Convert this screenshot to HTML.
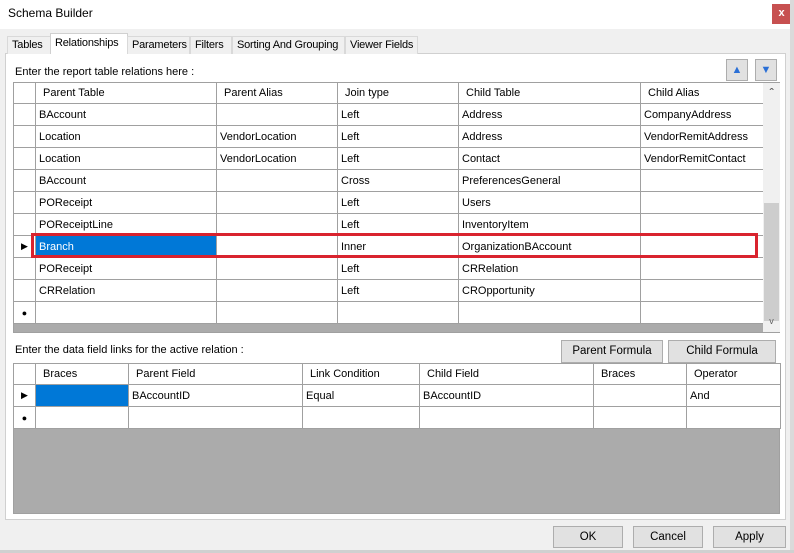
<!DOCTYPE html>
<html><head><meta charset="utf-8"><style>
*{box-sizing:border-box;margin:0;padding:0}
body{width:794px;height:553px;background:#f0f0f0;font-family:"Liberation Sans",sans-serif;font-size:11px;color:#000;position:relative;overflow:hidden}
.a{position:absolute;white-space:nowrap}
.tab{position:absolute;top:36px;height:18px;border:1px solid #d9d9d9;border-bottom:none;background:#f0f0f0;padding:2px 0 0 4px;font-size:11px;white-space:nowrap;overflow:hidden;letter-spacing:-0.2px}
.btn{position:absolute;background:#e1e1e1;border:1px solid #adadad;text-align:center;font-size:11.5px;white-space:nowrap}
table{border-collapse:collapse;position:absolute;table-layout:fixed;background:#fff}
td{border:1px solid #a0a0a0;height:22px;padding:0 3px;white-space:nowrap;overflow:hidden;font-size:11px}
tr.h td{height:21px;padding-left:7px}
td.rh{padding:0;text-align:center;font-size:9px}
.sel{background:#0078d7;color:#fff}
</style></head><body>
<div class="a" style="left:0;top:0;width:794px;height:29px;background:#fff"></div>
<div class="a" style="left:8px;top:6px;font-size:12px">Schema Builder</div>
<div class="a" style="left:772px;top:4px;width:19px;height:20px;background:#c75050;color:#fff;font-size:11px;text-align:center;line-height:19px;font-weight:bold">x</div>
<div class="a" style="left:790px;top:0;width:4px;height:553px;background:#dadada"></div>
<div class="a" style="left:0;top:550px;width:794px;height:3px;background:#d0d0d0"></div>

<div class="a" style="left:5px;top:53px;width:781px;height:467px;background:#fff;border:1px solid #d0d0d0"></div>
<div class="tab" style="left:7px;width:44px">Tables</div>
<div class="tab" style="left:50px;top:33px;height:21px;width:78px;background:#fff;border-color:#d0d0d0;padding-top:3px">Relationships</div>
<div class="tab" style="left:127px;width:63px">Parameters</div>
<div class="tab" style="left:190px;width:42px">Filters</div>
<div class="tab" style="left:232px;width:113px">Sorting And Grouping</div>
<div class="tab" style="left:345px;width:73px">Viewer Fields</div>

<div class="a" style="left:15px;top:66px">Enter the report table relations here :</div>
<div class="btn" style="left:726px;top:59px;width:22px;height:22px;color:#2a6fd6;font-size:11px;line-height:20px">&#9650;</div>
<div class="btn" style="left:755px;top:59px;width:22px;height:22px;color:#2a6fd6;font-size:11px;line-height:20px">&#9660;</div>

<div class="a" style="left:13px;top:82px;width:767px;height:251px;background:#ababab;border:1px solid #a0a0a0"></div>
<table style="left:13px;top:82px;width:750px">
<colgroup><col style="width:22px"><col style="width:181px"><col style="width:121px"><col style="width:121px"><col style="width:182px"><col style="width:123px"></colgroup>
<tr class="h"><td class="rh"></td><td>Parent Table</td><td>Parent Alias</td><td>Join type</td><td>Child Table</td><td>Child Alias</td></tr>
<tr><td class="rh"></td><td>BAccount</td><td></td><td>Left</td><td>Address</td><td>CompanyAddress</td></tr>
<tr><td class="rh"></td><td>Location</td><td>VendorLocation</td><td>Left</td><td>Address</td><td>VendorRemitAddress</td></tr>
<tr><td class="rh"></td><td>Location</td><td>VendorLocation</td><td>Left</td><td>Contact</td><td>VendorRemitContact</td></tr>
<tr><td class="rh"></td><td>BAccount</td><td></td><td>Cross</td><td>PreferencesGeneral</td><td></td></tr>
<tr><td class="rh"></td><td>POReceipt</td><td></td><td>Left</td><td>Users</td><td></td></tr>
<tr><td class="rh"></td><td>POReceiptLine</td><td></td><td>Left</td><td>InventoryItem</td><td></td></tr>
<tr><td class="rh">&#9654;</td><td class="sel">Branch</td><td></td><td>Inner</td><td>OrganizationBAccount</td><td></td></tr>
<tr><td class="rh"></td><td>POReceipt</td><td></td><td>Left</td><td>CRRelation</td><td></td></tr>
<tr><td class="rh"></td><td>CRRelation</td><td></td><td>Left</td><td>CROpportunity</td><td></td></tr>
<tr><td class="rh">&#9679;</td><td></td><td></td><td></td><td></td><td></td></tr>
</table>
<div class="a" style="left:763px;top:83px;width:17px;height:249px;background:#f0f0f0"></div>
<div class="a" style="left:764px;top:203px;width:15px;height:118px;background:#cdcdcd"></div>
<div class="a" style="left:764px;top:86px;width:15px;text-align:center;font-size:12px;color:#606060;font-weight:bold">&#710;</div>
<div class="a" style="left:764px;top:316px;width:15px;text-align:center;font-size:9px;color:#606060">v</div>
<div class="a" style="left:31px;top:233px;width:727px;height:25px;border:3px solid #d9232e"></div>

<div class="a" style="left:15px;top:344px">Enter the data field links for the active relation :</div>
<div class="btn" style="left:561px;top:340px;width:102px;height:23px;line-height:21px">Parent Formula</div>
<div class="btn" style="left:668px;top:340px;width:108px;height:23px;line-height:21px">Child Formula</div>

<div class="a" style="left:13px;top:363px;width:767px;height:151px;background:#ababab;border:1px solid #a0a0a0"></div>
<table style="left:13px;top:363px;width:767px">
<colgroup><col style="width:22px"><col style="width:93px"><col style="width:174px"><col style="width:117px"><col style="width:174px"><col style="width:93px"><col style="width:94px"></colgroup>
<tr class="h"><td class="rh"></td><td>Braces</td><td>Parent Field</td><td>Link Condition</td><td>Child Field</td><td>Braces</td><td>Operator</td></tr>
<tr><td class="rh">&#9654;</td><td class="sel"></td><td>BAccountID</td><td>Equal</td><td>BAccountID</td><td></td><td>And</td></tr>
<tr><td class="rh">&#9679;</td><td></td><td></td><td></td><td></td><td></td><td></td></tr>
</table>

<div class="btn" style="left:553px;top:526px;width:70px;height:22px;line-height:20px">OK</div>
<div class="btn" style="left:633px;top:526px;width:70px;height:22px;line-height:20px">Cancel</div>
<div class="btn" style="left:713px;top:526px;width:73px;height:22px;line-height:20px">Apply</div>
</body></html>
